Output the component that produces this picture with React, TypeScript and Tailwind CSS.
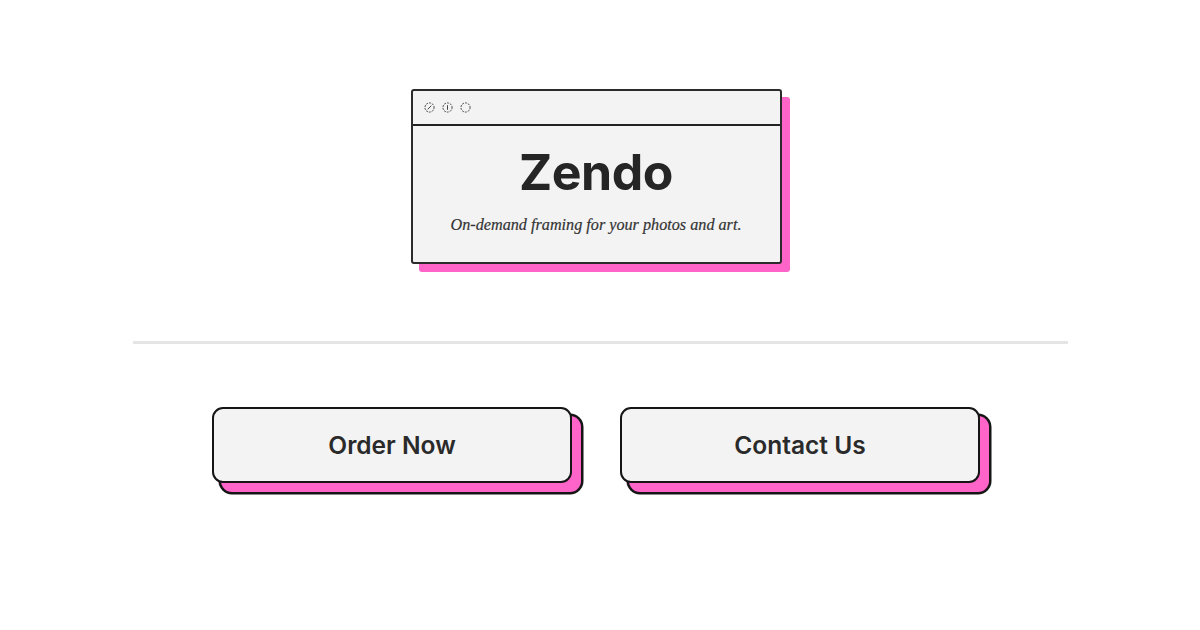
const DotIcon = ({ mark }: { mark: "slash" | "bar" | "none" }) => (
  <svg width="11" height="11" viewBox="0 0 12 12" fill="none" stroke="#333" strokeWidth="1">
    <circle cx="6" cy="6" r="5" strokeDasharray="2 1.2" />
    {mark === "slash" && <path d="M4 8 L8 4" />}
    {mark === "bar" && <path d="M6 3.5 V8.5" />}
  </svg>
);

const ActionButton = ({ label }: { label: string }) => (
  <button className="w-[360px] h-[76px] rounded-[11px] border-[2.5px] border-[#151515] bg-[#f3f3f3] text-[24.5px] font-semibold text-[#2a2a2a] shadow-[9px_9px_0_0_#ff64c8,9px_9px_0_2.5px_#151515] [font-family:Inter,'Liberation_Sans',sans-serif]">
    {label}
  </button>
);

export default function App() {
  return (
    <div className="min-h-screen w-full bg-white flex flex-col items-center pt-[89px]">
      {/* Hero window */}
      <div className="pr-[8px]">
        <div className="w-[371px] h-[175px] rounded-[3px] border-2 border-[#2b2b2b] bg-[#f3f3f3] shadow-[8px_8px_0_0_#ff64c8] flex flex-col">
          <div className="h-[35px] border-b-2 border-[#222] flex items-center gap-[7px] pl-[11px]">
            <DotIcon mark="slash" />
            <DotIcon mark="bar" />
            <DotIcon mark="none" />
          </div>
          <div className="flex flex-col items-center pt-[21px]">
            <h1 className="text-[50px] leading-none font-bold text-[#252525] tracking-[-0.5px] [font-family:Inter,'Liberation_Sans',sans-serif]">
              Zendo
            </h1>
            <p className="mt-[18px] text-[16.2px] leading-[20px] italic text-[#333] [font-family:'Liberation_Serif',serif] [-webkit-text-stroke:0.2px_#333]">
              On-demand framing for your photos and art.
            </p>
          </div>
        </div>
      </div>

      <div className="mt-[77px] w-[935px] h-[3px] bg-[#e5e5e5]" />

      <div className="mt-[63px] flex gap-[48px] pr-[8px]">
        <ActionButton label="Order Now" />
        <ActionButton label="Contact Us" />
      </div>
    </div>
  );
}
